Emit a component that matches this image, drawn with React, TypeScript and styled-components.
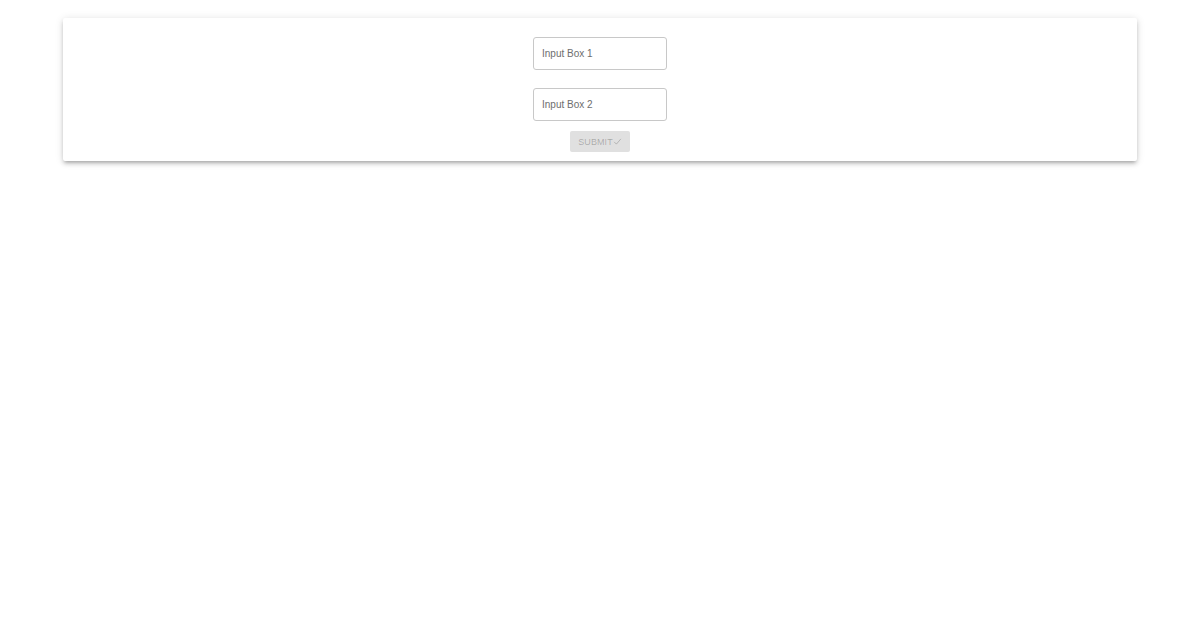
import styled, { createGlobalStyle } from 'styled-components';

const GlobalStyle = createGlobalStyle`
  html, body {
    margin: 0;
    min-height: 100%;
    background: #ffffff;
    font-family: 'Liberation Sans', Arial, sans-serif;
  }
`;

const Page = styled.div`
  min-height: 100vh;
  box-sizing: border-box;
  padding: 18px 0 20px;
  display: flex;
  align-items: flex-start;
  justify-content: center;
`;

const Card = styled.form`
  width: 1074px;
  background: #ffffff;
  border-radius: 2px;
  box-shadow: 0 3px 3px -2px rgba(0, 0, 0, 0.2), 0 3px 4px 0 rgba(0, 0, 0, 0.14),
    0 1px 8px 0 rgba(0, 0, 0, 0.12);
  padding: 19px 0 9px;
  display: flex;
  flex-direction: column;
  align-items: center;
`;

const Field = styled.input<{ last?: boolean }>`
  box-sizing: border-box;
  width: 134px;
  height: 33px;
  margin-bottom: ${({ last }) => (last ? 10 : 18)}px;
  padding: 0 8px;
  border: 1px solid #c8c8c8;
  border-radius: 3px;
  font-family: 'Liberation Sans', Arial, sans-serif;
  font-size: 10px;
  color: #333;
  outline: none;
  &::placeholder {
    color: #6e6e6e;
    opacity: 1;
  }
`;

const SubmitButton = styled.button`
  width: 60px;
  height: 21px;
  border: none;
  border-radius: 2px;
  background: #e0e0e0;
  color: rgba(0, 0, 0, 0.26);
  font-family: 'Liberation Sans', Arial, sans-serif;
  font-size: 9px;
  letter-spacing: 0.1px;
  display: flex;
  align-items: center;
  justify-content: center;
  padding: 0;
`;

const Check = () => (
  <svg width="9" height="9" viewBox="0 0 24 24" fill="none" stroke="currentColor" strokeWidth="2">
    <path d="M3 13l6 6L21 5" />
  </svg>
);

export default function App() {
  return (
    <>
      <GlobalStyle />
      <Page>
        <Card onSubmit={(e) => e.preventDefault()}>
          <Field placeholder="Input Box 1" />
          <Field placeholder="Input Box 2" last />
          <SubmitButton type="submit" disabled>
            SUBMIT
            <Check />
          </SubmitButton>
        </Card>
      </Page>
    </>
  );
}
